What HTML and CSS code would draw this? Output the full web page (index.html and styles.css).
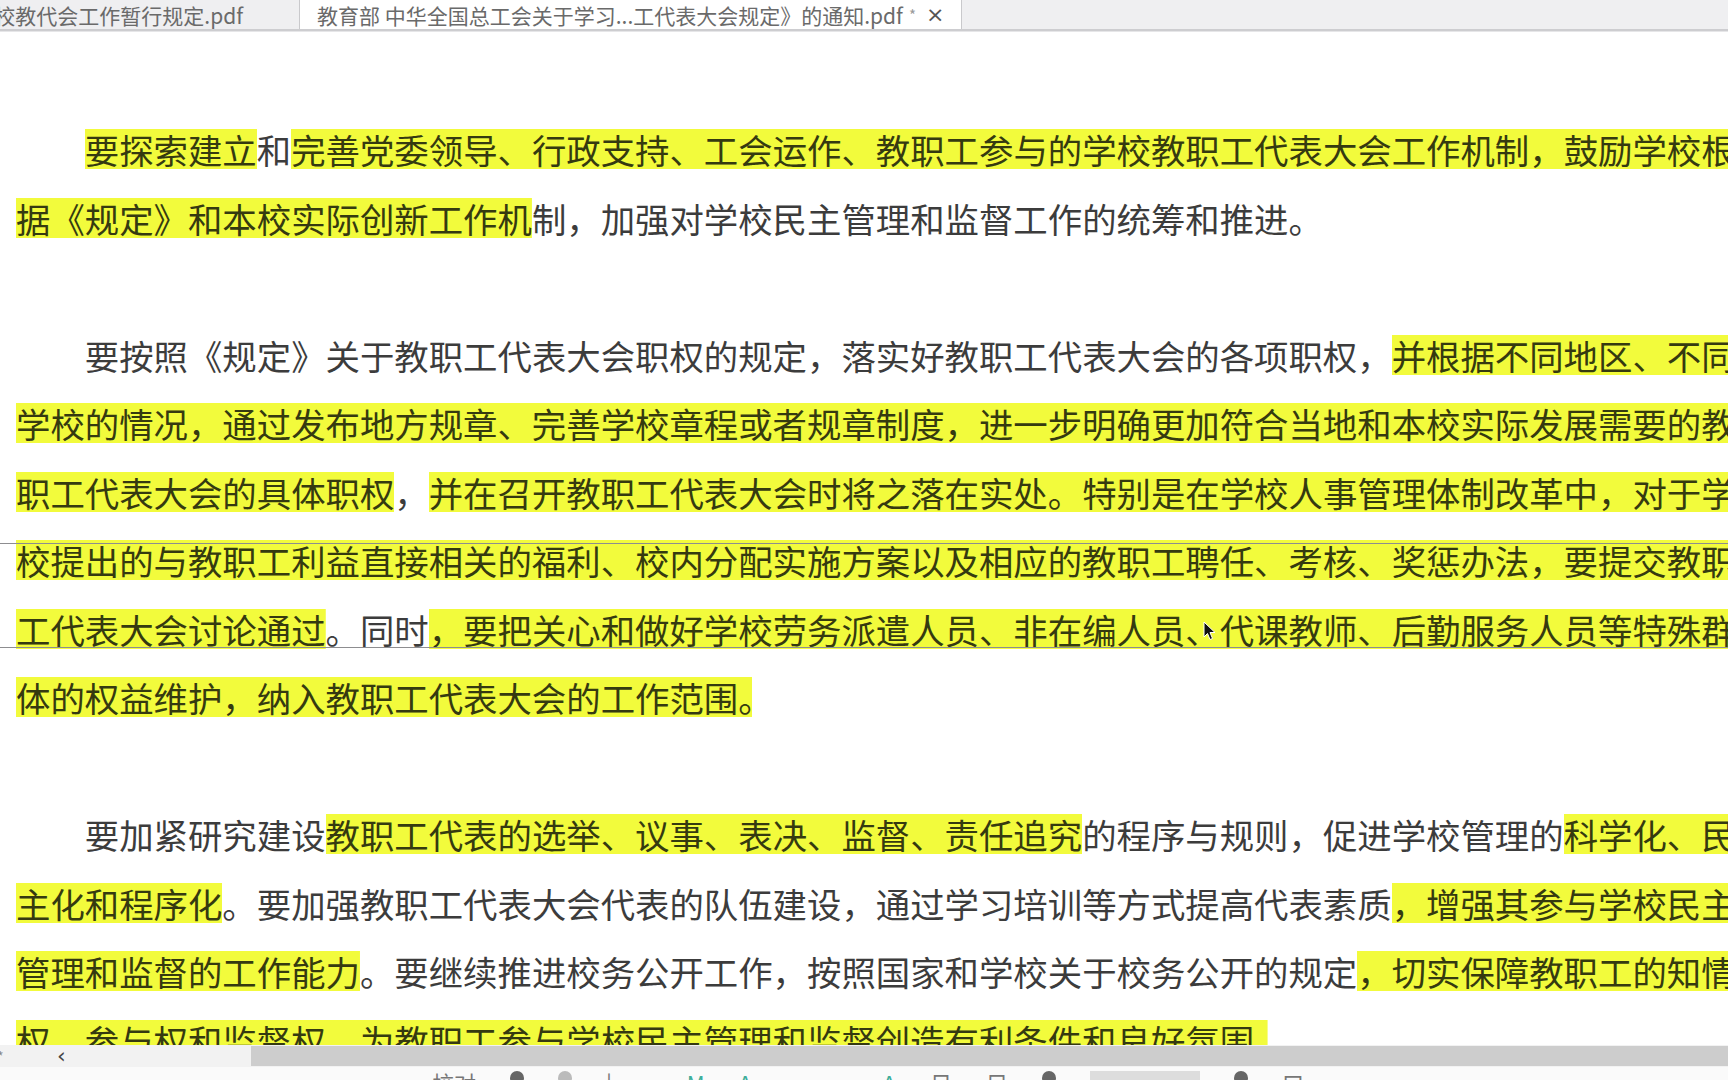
FILE: index.html
```html
<!DOCTYPE html>
<html lang="zh-CN">
<head>
    <meta charset="UTF-8">
    <meta name="viewport" content="width=device-width, initial-scale=1.0">
    <title>PDF</title>
<link rel="stylesheet" href="styles.css">
</head>
<body>
    <div class="tabbar">
        <div class="tab tab_first"><span class="tab_name">校教代会工作暂行规定.pdf</span></div>
        <div class="tab tab_active">
            <span class="tab_name">教育部 中华全国总工会关于学习...工代表大会规定》的通知.pdf</span>
            <span class="tab_mark">*</span>
            <span class="tab_close">×</span>
        </div>
    </div>

    <div class="doc">
        <div class="line indent"><span class="hl">要探索建立</span>和<span class="hl">完善党委领导、行政支持、工会运作、教职工参与的学校教职工代表大会工作机制，鼓励学校根</span></div>
        <div class="line"><span class="hl">据《规定》和本校实际创新工作机</span>制，加强对学校民主管理和监督工作的统筹和推进。</div>
        <div class="line"></div>
        <div class="line indent">要按照《规定》关于教职工代表大会职权的规定，落实好教职工代表大会的各项职权，<span class="hl">并根据不同地区、不同</span></div>
        <div class="line"><span class="hl">学校的情况，通过发布地方规章、完善学校章程或者规章制度，进一步明确更加符合当地和本校实际发展需要的教</span></div>
        <div class="line"><span class="hl">职工代表大会的具体职权</span>，<span class="hl">并在召开教职工代表大会时将之落在实处。特别是在学校人事管理体制改革中，对于学</span></div>
        <div class="line"><span class="hl">校提出的与教职工利益直接相关的福利、校内分配实施方案以及相应的教职工聘任、考核、奖惩办法，要提交教职</span></div>
        <div class="line"><span class="hl">工代表大会讨论通过</span>。同时<span class="hl">，要把关心和做好学校劳务派遣人员、非在编人员、代课教师、后勤服务人员等特殊群</span></div>
        <div class="line"><span class="hl">体的权益维护，纳入教职工代表大会的工作范围</span><span class="hl_half">。</span></div>
        <div class="line"></div>
        <div class="line indent">要加紧研究建设<span class="hl">教职工代表的选举、议事、表决、监督、责任追究</span>的程序与规则，促进学校管理的<span class="hl">科学化、民</span></div>
        <div class="line"><span class="hl">主化和程序化</span>。要加强教职工代表大会代表的队伍建设，通过学习培训等方式提高代表素质<span class="hl">，增强其参与学校民主</span></div>
        <div class="line"><span class="hl">管理和监督的工作能力</span>。要继续推进校务公开工作，按照国家和学校关于校务公开的规定<span class="hl">，切实保障教职工的知情</span></div>
        <div class="line"><span class="hl">权、参与权和监督权，为教职工参与学校民主管理和监督创造有利条件和良好氛围</span><span class="hl_half">。</span></div>

        <!-- 选中的文本框 -->
        <div class="sel_box"></div>
        <svg class="pointer" width="14" height="20" viewBox="0 0 14 20">
            <path d="M1 1 L1 16 L4.5 12.5 L7 18.5 L9.5 17.5 L7 11.5 L12 11.5 Z" fill="#111" stroke="#fff" stroke-width="1"/>
        </svg>
    </div>

    <div class="hscroll">
        <span class="hs_edge">*</span>
        <span class="hs_arrow">&lsaquo;</span>
        <div class="hs_thumb"></div>
    </div>
    <div class="statusbar">
        <span class="st gray">校对</span>
        <span class="st dot"></span>
        <span class="st dot light"></span>
        <span class="st gray">|</span>
        <span class="st gray">‹</span>
        <span class="st teal">M</span>
        <span class="st teal">A</span>
        <span class="st gray">·</span>
        <span class="st gray">›</span>
        <span class="st teal">A</span>
        <span class="st gray">日</span>
        <span class="st gray">目</span>
        <span class="st dot"></span>
        <span class="st bar"></span>
        <span class="st dot"></span>
        <span class="st gray">口</span>
    </div>
</body>
</html>
```

FILE: styles.css
```css
body{
    margin: 0;
    width: 1728px;
    height: 1080px;
    overflow: hidden;
    display: flex;
    flex-direction: column;
    background: #fff;
    font-family: "Noto Sans CJK SC", "Noto Sans", sans-serif;
}

/* 标签栏 */
.tabbar{
    height: 29px;
    flex: none;
    display: flex;
    background: #efeff1;
    border-bottom: 2px solid #cdcdd0;
    box-shadow: 0 1px 0 #e6e6e8;
}
.tab{
    height: 100%;
    display: flex;
    align-items: center;
    font-size: 21px;
    color: #6a6a6a;
    white-space: nowrap;
    overflow: hidden;
}
.tab_first{
    width: 300px;
    justify-content: flex-end;
    box-sizing: border-box;
    padding-right: 56px;
    border-right: 1px solid #c9c9cc;
}
.tab_active{
    width: 662px;
    box-sizing: border-box;
    padding-left: 17px;
    background: #fff;
    border-right: 1px solid #c9c9cc;
}
.tab_mark{
    margin-left: 6px;
    color: #9a9a9a;
    font-size: 15px;
}
.tab_close{
    margin-left: 10px;
    font-size: 22px;
    color: #555;
    font-family: "DejaVu Sans", sans-serif;
}

/* 文档区 */
.doc{
    flex: 1;
    min-height: 0;
    position: relative;
    overflow: hidden;
    padding: 84px 0 0 16px;
}
.line{
    height: 68.5px;
    line-height: 68.5px;
    font-size: 34.4px;
    color: #3c3c3c;
    white-space: nowrap;
}
.indent{
    padding-left: 2em;
}
.hl{
    background: linear-gradient(#f2fb3c, #f2fb3c) no-repeat center / 100% 40px;
    color: #353a10;
}
.hl_half{
    background: linear-gradient(#f2fb3c, #f2fb3c) no-repeat left center / 40% 40px;
    color: #353a10;
}
.sel_box{
    position: absolute;
    left: 0;
    right: 0;
    top: 512px;
    height: 103px;
    border-top: 1.5px solid #8d8d90;
    border-bottom: 1.5px solid #8d8d90;
}
.pointer{
    position: absolute;
    left: 1203px;
    top: 590px;
}

/* 底部滚动条 */
.hscroll{
    height: 22px;
    flex: none;
    display: flex;
    align-items: center;
    background: #f2f2f2;
    overflow: hidden;
}
.hs_edge{
    width: 8px;
    font-size: 14px;
    line-height: 1;
    color: #888;
    margin-left: -3px;
}
.hs_arrow{
    width: 24px;
    margin-left: 52px;
    font-size: 22px;
    line-height: 1;
    color: #444;
    font-family: "DejaVu Sans", sans-serif;
}
.hs_thumb{
    margin-left: 170px;
    flex: 1;
    height: 20px;
    background: #cdcdcd;
}
.statusbar{
    height: 13px;
    flex: none;
    display: flex;
    align-items: flex-start;
    gap: 34px;
    padding-left: 432px;
    background: #fafafa;
    overflow: hidden;
}
.st{
    font-size: 22px;
    line-height: 22px;
    margin-top: 4px;
}
.gray{ color: #777; }
.teal{ color: #3fae9a; }
.dot{
    width: 14px;
    height: 14px;
    border-radius: 50%;
    background: #666;
}
.dot.light{ background: #bbb; }
.bar{
    width: 110px;
    height: 10px;
    background: #ddd;
}
```
